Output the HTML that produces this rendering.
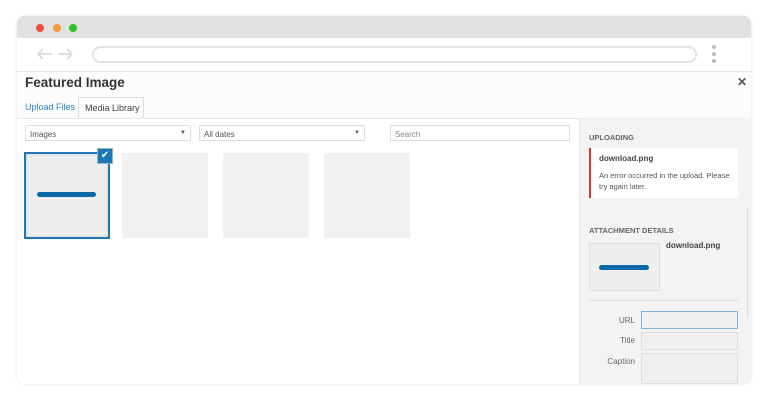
<!DOCTYPE html>
<html><head><style>
*{box-sizing:border-box;margin:0;padding:0}
body{width:768px;height:414px;background:#fff;font-family:"Liberation Sans",sans-serif;position:relative;overflow:hidden}
.a{position:absolute}
.win{left:17px;top:16px;width:734px;height:368px;border-radius:8px;overflow:hidden;background:#fcfcfc;box-shadow:0 0 3px rgba(0,0,0,.12)}
.sel{background:#fff;border:1px solid #ddd;font-size:8px;color:#555;padding:4px 4px}
.lbl{font-size:8px;color:#666;text-align:right;width:40px}
.inp{background:#f0f0f0;border:1px solid #ddd}
</style></head><body>
<div class="a win">
 <div class="a" style="left:0;top:0;width:734px;height:22px;background:#e1e1e1"></div>
 <div class="a" style="left:19px;top:8px;width:8px;height:8px;border-radius:50%;background:#f0473f"></div>
 <div class="a" style="left:36px;top:8px;width:8px;height:8px;border-radius:50%;background:#f59a3a"></div>
 <div class="a" style="left:52px;top:8px;width:8px;height:8px;border-radius:50%;background:#2fc12f"></div>
 <div class="a" style="left:0;top:22px;width:734px;height:34px;background:#fff;border-bottom:1px solid #e8e8e8"></div>
 <svg class="a" style="left:19px;top:31px" width="40" height="14"><path d="M2 7h14M2 7l5-5M2 7l5 5M22 7h14M36 7l-5-5M36 7l-5 5" stroke="#ddd" stroke-width="2" fill="none"/></svg>
 <div class="a" style="left:75px;top:30px;width:605px;height:17px;border:2px solid #e3e3e3;border-radius:9px"></div>
 <div class="a" style="left:695px;top:29px;width:4px;height:4px;border-radius:50%;background:#bbb"></div>
 <div class="a" style="left:695px;top:36px;width:4px;height:4px;border-radius:50%;background:#bbb"></div>
 <div class="a" style="left:695px;top:43px;width:4px;height:4px;border-radius:50%;background:#bbb"></div>
 <div class="a" style="left:8px;top:59px;font-size:13.5px;font-weight:bold;color:#333">Featured Image</div>
 <div class="a" style="left:720px;top:59px;font-size:12px;font-weight:bold;color:#555">✕</div>
 <div class="a" style="left:8px;top:86px;font-size:9px;color:#2a84c3">Upload Files</div>
 <div class="a" style="left:61px;top:81px;width:66px;height:22px;border:1px solid #ddd;border-bottom:none;background:#fcfcfc;font-size:9px;color:#444;padding:5px 0 0 6px">Media Library</div>
 <div class="a" style="left:0;top:102px;width:734px;height:266px;background:#fff;border-top:1px solid #e5e5e5"></div>
 <div class="a sel" style="left:8px;top:109px;width:166px;height:16px">Images<span style="float:right;font-size:6px">▼</span></div>
 <div class="a sel" style="left:182px;top:109px;width:166px;height:16px">All dates<span style="float:right;font-size:6px">▼</span></div>
 <div class="a sel" style="left:373px;top:109px;width:180px;height:16px;color:#888">Search</div>
 <div class="a" style="left:7px;top:136px;width:86px;height:87px;border:2px solid #1e77b5;background:#eee;box-shadow:inset 0 0 3px #ccc"></div>
 <div class="a" style="left:20px;top:176px;width:59px;height:5px;border-radius:3px;background:#0a6aa8"></div>
 <div class="a" style="left:80px;top:132px;width:16px;height:16px;background:#1e77b5;border:1px solid #8bb;color:#fff;font-size:10px;text-align:center;line-height:14px">✔</div>
 <div class="a" style="left:105px;top:137px;width:86px;height:85px;background:#f1f1f1"></div>
 <div class="a" style="left:206px;top:137px;width:86px;height:85px;background:#f1f1f1"></div>
 <div class="a" style="left:307px;top:137px;width:86px;height:85px;background:#f1f1f1"></div>
 <div class="a" style="left:562px;top:102px;width:172px;height:266px;background:#f3f3f3;border-left:1px solid #e2e2e2"></div>
 <div class="a" style="left:572px;top:117px;font-size:7.5px;font-weight:bold;color:#666">UPLOADING</div>
 <div class="a" style="left:572px;top:132px;width:149px;height:50px;background:#fff;border-left:2px solid #dc3232"></div>
 <div class="a" style="left:582px;top:138px;font-size:8px;font-weight:bold;color:#444">download.png</div>
 <div class="a" style="left:582px;top:154px;font-size:7.5px;color:#555;line-height:11px;width:140px">An error occurred in the upload. Please try again later.</div>
 <div class="a" style="left:572px;top:210px;font-size:7.5px;font-weight:bold;color:#666">ATTACHMENT DETAILS</div>
 <div class="a" style="left:572px;top:227px;width:71px;height:48px;background:#eee;border:1px solid #ddd"></div>
 <div class="a" style="left:582px;top:249px;width:50px;height:5px;border-radius:3px;background:#0a6aa8"></div>
 <div class="a" style="left:649px;top:225px;font-size:8px;font-weight:bold;color:#444">download.png</div>
 <div class="a" style="left:572px;top:284px;width:149px;height:1px;background:#ddd"></div>
 <div class="a lbl" style="left:578px;top:300px">URL</div>
 <div class="a lbl" style="left:578px;top:320px">Title</div>
 <div class="a lbl" style="left:578px;top:341px">Caption</div>
 <div class="a inp" style="left:624px;top:295px;width:97px;height:18px;border-color:#7fb0dd"></div>
 <div class="a inp" style="left:624px;top:316px;width:97px;height:18px"></div>
 <div class="a inp" style="left:624px;top:337px;width:97px;height:31px"></div>
 <div class="a" style="left:730px;top:192px;width:1px;height:110px;background:#ddd"></div>
</div>
</body></html>
